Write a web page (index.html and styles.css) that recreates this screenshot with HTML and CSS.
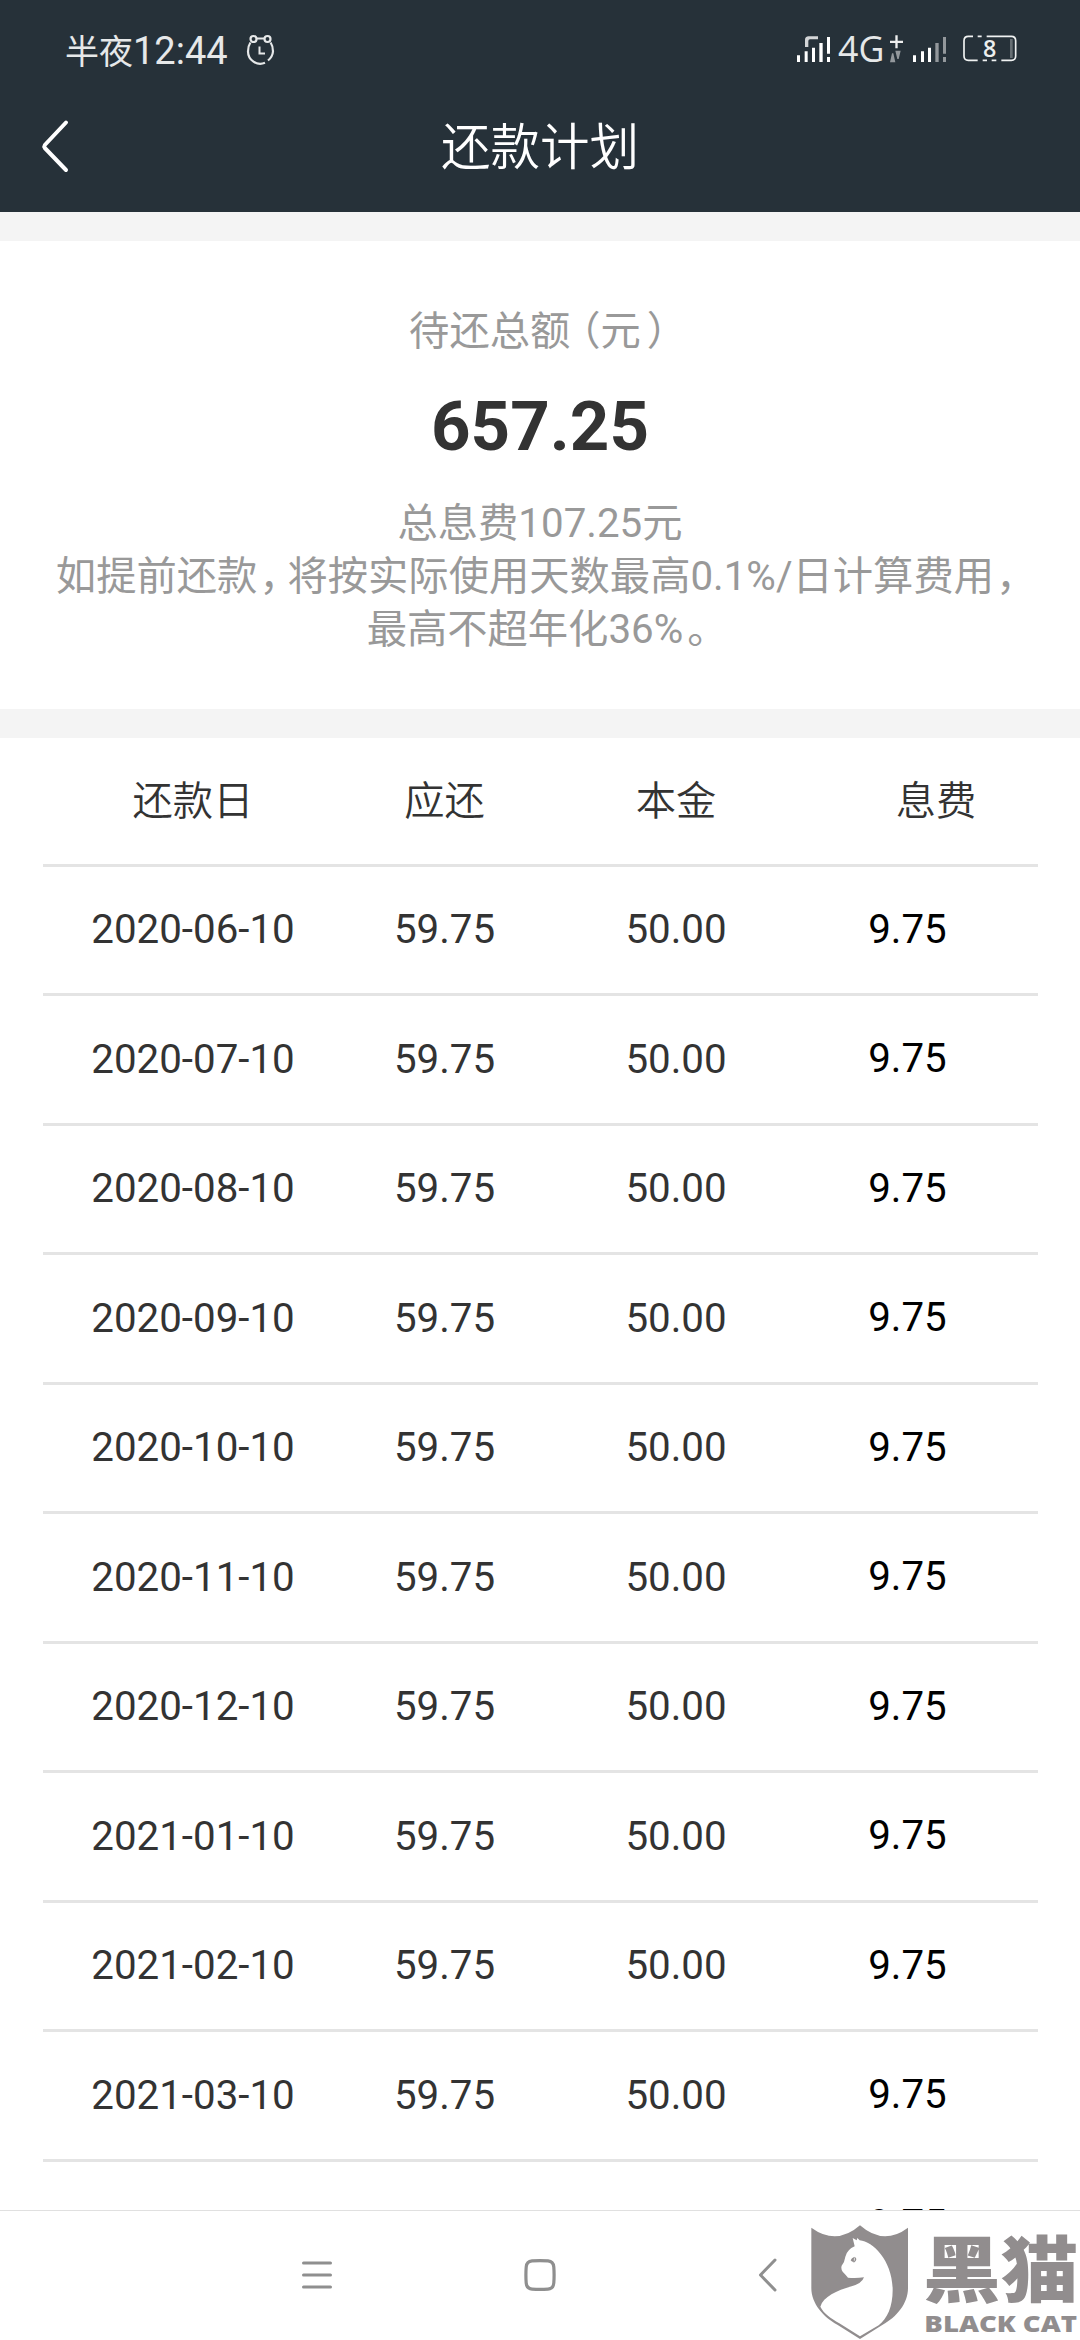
FILE: index.html
```
<!DOCTYPE html>
<html lang="zh-CN">
<head>
  <meta charset="UTF-8">
  <title>还款计划</title>
  <link rel="stylesheet" href="styles.css">
</head>
<body>
  <div class="page">
    <header class="header">
      <div class="status-bar">
        <div class="status-left">
          <span class="status-time"><span class="period">半夜</span>12:44</span>
          <svg class="alarm" width="30" height="32" viewBox="0 0 30 32" fill="none" stroke="#e6e8e9" stroke-width="2.2">
            <circle cx="7.5" cy="5" r="3"/>
            <circle cx="21.5" cy="5" r="3"/>
            <path d="M10.500 4.500h8M4.400 8.500Q2 12 2 17.500A12.300 12.300 0 0 0 19 28.800M24.600 8.500Q27 12 27 17.500Q26.500 23 22 26.500"/>
            <path d="M13.500 12.500v7h5.500" stroke-width="2"/>
          </svg>
        </div>
        <svg class="status-icons" width="222" height="36" viewBox="0 0 666 108">
          <g fill="#fff">
            <path d="M6 67h9v20H6zM29 55h9v32h-9zM51 44h9v43h-9zM73 30h10v57H73zM96 12h9v50h-9zM96 72h9v15h-9z"/>
            <path d="M30 42V21q0-11 11-11h28v9H45q-5 0-5 5v18z" opacity=".8"/>
            <path d="M354 67h9v20h-9zM378 55h9v32h-9zM399 44h9v43h-9z"/>
            <path d="M421 30h10v57h-10zM444 12h9v50h-9zM444 72h9v15h-9z" opacity=".5"/>
            <path d="M301 7h7v16h16v7h-16v16h-7V30h-16v-7h16z" opacity=".92"/>
            <path d="M285 88l6-27h4l6 27zM301 53h16l-6 25h-4z" opacity=".5"/>
          </g>
          <text class="network" x="129" y="88">4G</text>
          <path d="M534 10h-14q-13 0-13 13v46q0 13 13 13h28M548 10h12M575 10h74q13 0 13 13v46q0 13-13 13h-30M563 82h13M590 82h14" fill="none" stroke="#f0f2f2" stroke-width="5"/>
          <path d="M645 18h8v57h-8z" fill="#fff" opacity=".3"/>
          <text class="battery-level" x="584" y="71" text-anchor="middle">8</text>
        </svg>
      </div>
      <div class="title-bar">
        <svg class="back" width="30" height="56" viewBox="0 0 30 56" fill="none" stroke="#fff" stroke-width="4" stroke-linecap="round" stroke-linejoin="round">
          <path d="M26 4.500L4.800 27Q3.800 28.500 4.800 30L26 52"/>
        </svg>
        <h1>还款计划</h1>
      </div>
    </header>

    <main class="content">
      <section class="summary">
        <p class="label">待还总额<span class="paren-open">（</span>元<span class="paren-close">）</span></p>
        <p class="amount">657.25</p>
        <p class="note">总息费107.25元</p>
        <p class="note">如提前还款<span class="comma">，</span>将按实际使用天数最高0.1%/日计算费用<span class="comma">，</span></p>
        <p class="note">最高不超年化36%<span class="stop">。</span></p>
      </section>

      <section class="plan">
        <div class="row head"><span>还款日</span><span>应还</span><span>本金</span><span class="fee">息费</span></div>
        <div class="row"><span>2020-06-10</span><span>59.75</span><span>50.00</span><span class="fee">9.75</span></div>
        <div class="row"><span>2020-07-10</span><span>59.75</span><span>50.00</span><span class="fee">9.75</span></div>
        <div class="row"><span>2020-08-10</span><span>59.75</span><span>50.00</span><span class="fee">9.75</span></div>
        <div class="row"><span>2020-09-10</span><span>59.75</span><span>50.00</span><span class="fee">9.75</span></div>
        <div class="row"><span>2020-10-10</span><span>59.75</span><span>50.00</span><span class="fee">9.75</span></div>
        <div class="row"><span>2020-11-10</span><span>59.75</span><span>50.00</span><span class="fee">9.75</span></div>
        <div class="row"><span>2020-12-10</span><span>59.75</span><span>50.00</span><span class="fee">9.75</span></div>
        <div class="row"><span>2021-01-10</span><span>59.75</span><span>50.00</span><span class="fee">9.75</span></div>
        <div class="row"><span>2021-02-10</span><span>59.75</span><span>50.00</span><span class="fee">9.75</span></div>
        <div class="row"><span>2021-03-10</span><span>59.75</span><span>50.00</span><span class="fee">9.75</span></div>
        <div class="row"><span></span><span></span><span></span><span class="fee">9.75</span></div>
      </section>
    </main>

    <nav class="nav-bar">
      <svg width="32" height="34" viewBox="0 0 32 34" fill="none" stroke="#8f8f8f" stroke-width="3" stroke-linecap="round">
        <path d="M2.500 5h27M2.500 17h27M2.500 29h27"/>
      </svg>
      <svg width="34" height="34" viewBox="0 0 34 34" fill="none" stroke="#8f8f8f" stroke-width="3.200">
        <path d="M9 2.900Q17 2.200 25 2.900Q30.300 3.300 30.800 9Q31.400 17 30.800 25Q30.300 30.700 25 31.100Q17 31.800 9 31.100Q3.700 30.700 3.200 25Q2.600 17 3.200 9Q3.700 3.300 9 2.900z"/>
      </svg>
      <svg width="22" height="36" viewBox="0 0 22 36" fill="none" stroke="#8f8f8f" stroke-width="3" stroke-linecap="round" stroke-linejoin="round">
        <path d="M18 3L3.500 18L18 33"/>
      </svg>
    </nav>

    <svg class="watermark" width="270" height="118" viewBox="90 126 810 354">
      <path d="M94 143Q170 198 240 136Q310 198 384 143V325C384 370 350 412 308 434L240 477L172 434C130 412 94 370 94 325z" fill="#918d8e"/>
      <path d="M218 174L230 181L232 174L239 181C280 184 338 245 338 330C338 380 322 416 296 436L240 469L178 430C152 414 132 402 121 380C130 350 170 332 215 319Q246 310 252 292Q226 296 204 293Q196 283 188 275Q182 266 185 257Q194 246 196 230Q202 208 224 199z" fill="#fff"/>
      <path d="M212 241Q214 233 224 230Q219 238 222 246Q215 246 212 241zM224 231Q232 236 227 243Q223 248 220 248Q226 240 224 231z" fill="#918d8e"/>
      <text class="mark-name" x="429" y="349" textLength="466" lengthAdjust="spacingAndGlyphs">黑猫</text>
      <text class="mark-latin" x="433" y="457" textLength="458" lengthAdjust="spacingAndGlyphs">BLACK CAT</text>
    </svg>
  </div>
</body>
</html>
```
FILE: styles.css
```
body {
  margin: 0;
  padding: 0;
  font-family: Roboto, "Noto Sans CJK SC", sans-serif;
  font-size: 40.3px;
  color: #333;
  background-color: #fff;
}

h1, p {
  margin: 0;
  font-weight: normal;
}

svg {
  display: block;
  flex: none;
}

.page {
  position: relative;
  display: flex;
  flex-direction: column;
  width: 1080px;
  height: 2340px;
  overflow: hidden;
}

/* header */
.header {
  flex: none;
  height: 212px;
  background-color: #263139;
  color: #fff;
}

.status-bar {
  display: flex;
  justify-content: space-between;
  height: 80px;
  padding: 0 63px 0 65px;
}

.status-left {
  display: flex;
  align-items: center;
  height: 102px;
  color: #e6e8e9;
}

.status-time {
  font-size: 38px;
  line-height: 50px;
}

.period {
  font-size: 34px;
}

.alarm {
  margin: 0 0 2px 18px;
}

.status-icons {
  margin-top: 33px;
}

.network {
  font-family: "Open Sans", sans-serif;
  font-size: 107px;
  fill: #e6e8e9;
}

.battery-level {
  font-family: "Open Sans", sans-serif;
  font-size: 70px;
  font-weight: 600;
  fill: #eceeee;
}

.title-bar {
  display: grid;
  grid-template-columns: 80px 1fr 80px;
  align-items: center;
  height: 132px;
}

.back {
  margin-left: 40px;
}

.title-bar h1 {
  padding-top: 4px;
  font-size: 49.5px;
  font-weight: 350;
  line-height: 60px;
  text-align: center;
}

/* content */
.content {
  flex: 1;
  min-height: 0;
  overflow: hidden;
  background-color: #f4f4f4;
}

.summary {
  box-sizing: border-box;
  height: 468px;
  margin-top: 29px;
  padding-top: 64px;
  background-color: #fff;
  color: #999;
  text-align: center;
  white-space: nowrap;
}

.label {
  line-height: 54px;
}

.amount {
  margin: 23px 0 25px;
  font-size: 69px;
  font-weight: bold;
  line-height: 90px;
  color: #333;
}

.note {
  line-height: 53px;
}

/* half-width punctuation with a little room on each side */
.paren-open,
.paren-close,
.comma,
.stop {
  font-family: "Noto Sans CJK SC", sans-serif;
  font-feature-settings: "halt";
  line-height: 1;
}

.paren-open {
  margin-left: 10px;
}

.paren-close {
  margin: 0 4px 0 6px;
}

.comma {
  margin: 0 8px 0 2px;
}

.stop {
  margin: 0 6px 0 4px;
}

/* repayment table */
.plan {
  margin-top: 29px;
  padding: 0 42px 0 43px;
  background-color: #fff;
}

.row {
  display: grid;
  grid-template-columns: 300px 203px 260px 232px;
  align-items: center;
  box-sizing: border-box;
  height: 129.5px;
  border-bottom: 3px solid #e4e4e4;
  line-height: 54px;
  text-align: center;
}

.row .fee {
  margin-bottom: 1px;
  padding-right: 29px;
  color: #000;
}

.head {
  height: 128.9px;
  padding-top: 2px;
  font-weight: 350;
}

.head .fee {
  margin: 0;
  padding: 0 0 0 28px;
  color: #333;
}

/* system navigation */
.nav-bar {
  display: flex;
  flex: none;
  box-sizing: border-box;
  height: 130px;
  padding: 47px 0 0 301px;
  border-top: 1px solid #e0e0e0;
  background-color: #fff;
}

.nav-bar svg:nth-child(2) {
  margin-left: 190px;
}

.nav-bar svg:nth-child(3) {
  margin: -1px 0 0 200px;
}

.watermark {
  position: absolute;
  right: 0;
  bottom: 0;
}

.watermark text {
  fill: #918d8e;
}

.mark-name {
  font-family: "Noto Sans CJK SC", sans-serif;
  font-size: 214px;
  font-weight: 900;
}

.mark-latin {
  font-family: "Open Sans", sans-serif;
  font-size: 68px;
  font-weight: 800;
}
```
